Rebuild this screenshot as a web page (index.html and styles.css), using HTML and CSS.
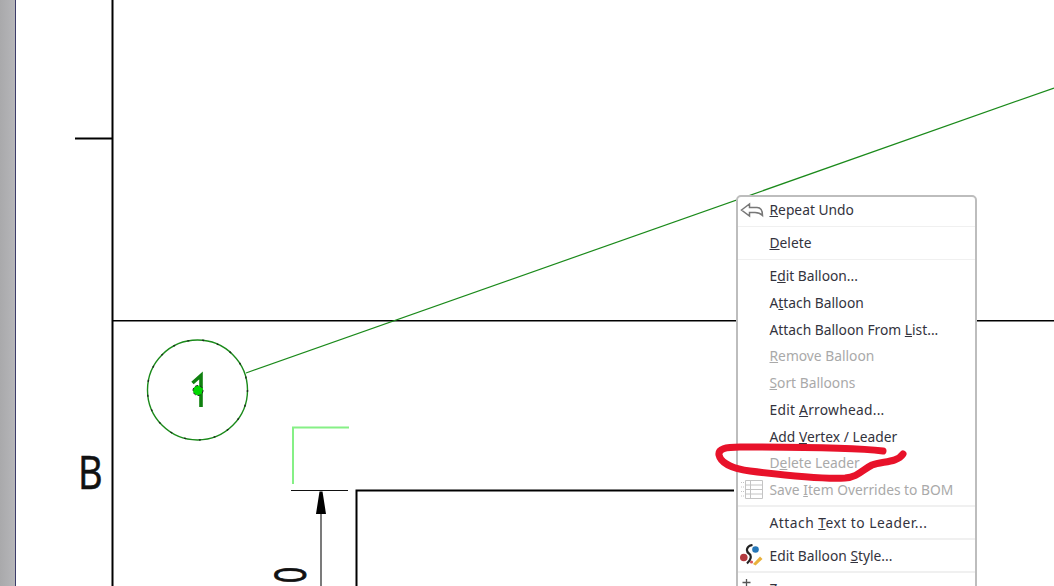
FILE: index.html
```html
<!DOCTYPE html>
<html lang="en">
<head>
    <meta charset="UTF-8">
    <meta name="viewport" content="width=device-width, initial-scale=1.0">
    <title>Balloon context menu</title>
    <link rel="stylesheet" href="styles.css">
</head>
<body>

    <!-- Grey strip left of the sheet -->
    <div class="side-strip"></div>

    <!-- Drawing sheet -->
    <div class="sheet">
        <svg class="drawing" width="1038" height="586" viewBox="16 0 1038 586">
            <!-- Border and zone lines -->
            <path class="line-heavy" d="M112.500 0V586M75 138.500H112"/>
            <path class="line-mid" d="M112 320.800H1054"/>
            <path class="line-heavy" d="M734 490.500H356.500V586"/>

            <!-- Leader and balloon -->
            <path class="leader" d="M246 373L1054 88"/>
            <circle class="balloon" cx="197.500" cy="390" r="50"/>
            <circle class="balloon-ticks" cx="197.500" cy="390" r="50"/>
            <path class="balloon-num" d="M192.500 383L201 375.500V407"/>
            <circle class="grip" cx="198" cy="390.500" r="5"/>

            <!-- Dimension -->
            <path class="corner" d="M293 484V427.500H349"/>
            <path class="line-thin" d="M291 490.500H348"/>
            <path class="dim-line" d="M321 514V586"/>
            <path class="arrow" d="M319.500 491.500H322.500L326 514H316Z"/>

            <text class="zone-letter" transform="translate(78 488.500) scale(1.03 1.22)">B</text>
            <text class="dim-value" transform="translate(305.500 583) rotate(-90) scale(.76 1.2)">0</text>
        </svg>
    </div>

    <!-- Right click menu -->
    <div class="context-menu">
        <div class="menu-item">
            <svg class="menu-icon" width="24" height="16" viewBox="0 0 24 16">
                <path class="undo-arrow" d="M1.500 8L9.500 2V5.500H17C20 5.500 22.500 8 22.500 13.500C20.500 11.500 18 10.500 15 10.500H9.500V14Z"/>
            </svg>
            <span><u>R</u>epeat Undo</span>
        </div>
        <div class="menu-sep"></div>
        <div class="menu-item"><span><u>D</u>elete</span></div>
        <div class="menu-sep"></div>
        <div class="menu-item"><span>E<u>d</u>it Balloon...</span></div>
        <div class="menu-item"><span>A<u>t</u>tach Balloon</span></div>
        <div class="menu-item"><span>Attach Balloon From <u>L</u>ist...</span></div>
        <div class="menu-item disabled"><span><u>R</u>emove Balloon</span></div>
        <div class="menu-item disabled"><span><u>S</u>ort Balloons</span></div>
        <div class="menu-item"><span class="wider">Edit <u>A</u>rrowhead...</span></div>
        <div class="menu-item"><span>Add <u>V</u>ertex / Leader</span></div>
        <div class="menu-item disabled"><span>D<u>e</u>lete Leader</span></div>
        <div class="menu-item disabled">
            <svg class="menu-icon" width="24" height="22" viewBox="0 0 24 22">
                <path class="bom-grid" d="M5.500 2.500H22.500V20.500H5.500ZM5.500 7H22.500M5.500 11.500H22.500M5.500 16H22.500M10.500 2.500V20.500"/>
                <path class="bom-dots" d="M1 4.500H4M1 9H4M1 13.500H4M1 18H4"/>
            </svg>
            <span>Save <u>I</u>tem Overrides to BOM</span>
        </div>
        <div class="menu-sep"></div>
        <div class="menu-item"><span class="widest">Attach <u>T</u>ext to Leader...</span></div>
        <div class="menu-sep"></div>
        <div class="menu-item">
            <svg class="menu-icon" width="24" height="22" viewBox="0 0 24 22">
                <circle cx="3.800" cy="13.500" r="3.800" fill="#b23a3f"/>
                <circle cx="15.500" cy="5.500" r="3.300" fill="#2677b8"/>
                <path d="M12.500 1C6.500 2 5.500 7 9 9.500C12 11.500 11 16 7 19.500" fill="none" stroke="#222" stroke-width="2.200"/>
                <path d="M13 20L20 12.500L22.500 15L15.500 21.500Z" fill="#e9b23c"/>
                <circle cx="11.500" cy="18" r="1.600" fill="#d9555a"/>
            </svg>
            <span>Edit Balloon <u>S</u>tyle...</span>
        </div>
        <div class="menu-sep"></div>
        <div class="menu-item">
            <svg class="menu-icon" width="24" height="20" viewBox="0 0 24 20">
                <path class="plus-mark" d="M6.500 1V9M2.500 4.500H10.500"/>
            </svg>
            <span>Zoom</span>
        </div>
    </div>

    <!-- Red marker scribble over the menu -->
    <svg class="scribble" width="1054" height="586" viewBox="0 0 1054 586">
        <path class="scribble-line" d="M883 451C850 447 780 447 740 447C725 447 718 449 719 455C721 464 735 469 750 471C790 476 825 479 845 478C858 477 862 470 872 465C882 461 897 463 903 454"/>
    </svg>

</body>
</html>
```

FILE: styles.css
```css
/* General reset */
* {
    margin: 0;
    padding: 0;
    box-sizing: border-box;
}

html, body {
    width: 1054px;
    height: 586px;
    overflow: hidden;
}

body {
    display: flex;
    position: relative;
    background-color: #ffffff;
    font-family: "Noto Sans", "Open Sans", sans-serif;
}

/* Left strip */
.side-strip {
    width: 16px;
    flex: none;
    background: linear-gradient(to right, #a9a9ab, #b6b6b9);
    border-right: 1px solid #3c3c6a;
}

/* Drawing */
.sheet {
    flex: 1;
}

.drawing {
    display: block;
}

.drawing path {
    fill: none;
}

.drawing .line-heavy {
    stroke: #000000;
    stroke-width: 2px;
}

.drawing .line-mid {
    stroke: #000000;
    stroke-width: 1.400px;
}

.drawing .line-thin {
    stroke: #111111;
    stroke-width: 1px;
}

.drawing .dim-line {
    stroke: #333333;
    stroke-width: 1.300px;
}

.drawing .leader {
    stroke: #1b8a1b;
    stroke-width: 1.200px;
}

.balloon {
    fill: none;
    stroke: #1a8a1a;
    stroke-width: 1.400px;
}

.balloon-ticks {
    fill: none;
    stroke: #1c2a1c;
    stroke-width: 1.400px;
    stroke-dasharray: 2 13;
}

.drawing .balloon-num {
    stroke: #0f800f;
    stroke-width: 3.600px;
}

.grip {
    fill: #00d800;
    stroke: #222222;
    stroke-width: 1px;
    stroke-dasharray: 3 2;
}

.drawing .corner {
    stroke: #86f086;
    stroke-width: 2px;
}

.drawing .arrow {
    fill: #000000;
}

.zone-letter {
    font-family: "Open Sans", sans-serif;
    font-size: 37px;
    fill: #111111;
    stroke: #111111;
    stroke-width: .5px;
}

.dim-value {
    font-family: "Open Sans", sans-serif;
    font-size: 37px;
    fill: #111111;
    stroke: #111111;
    stroke-width: .8px;
}

/* Context menu */
.context-menu {
    position: absolute;
    left: 736px;
    top: 195px;
    width: 241px;
    height: 420px;
    background-color: #ffffff;
    border: 2.500px solid #bdbdbd;
    border-radius: 5px;
    font-size: 13.800px;
    color: #33333d;
}

.menu-item {
    display: flex;
    align-items: center;
    position: relative;
    height: 26.700px;
    padding-left: 31.500px;
    white-space: nowrap;
}

.menu-item:first-child {
    margin-top: -.4px;
}

.menu-item.disabled {
    color: #a9a9a9;
}

.wider {
    letter-spacing: .25px;
}

.widest {
    letter-spacing: .5px;
}

.menu-sep {
    height: 1.500px;
    margin: 2.400px 0 2.400px;
    background-color: #f0f0f0;
}

.menu-icon {
    position: absolute;
    left: 2px;
    top: 50%;
    transform: translateY(-50%);
}

.undo-arrow {
    fill: #ffffff;
    stroke: #777777;
    stroke-width: 1.500px;
}

.bom-grid {
    fill: none;
    stroke: #c4c4c4;
    stroke-width: 1px;
}

.bom-dots {
    fill: none;
    stroke: #c4c4c4;
    stroke-width: 1px;
    stroke-dasharray: 1 1;
}

.plus-mark {
    fill: none;
    stroke: #555555;
    stroke-width: 1.300px;
}

/* Marker */
.scribble {
    position: absolute;
    left: 0;
    top: 0;
    pointer-events: none;
}

.scribble-line {
    fill: none;
    stroke: #e8122a;
    stroke-width: 7px;
    stroke-linecap: round;
    stroke-linejoin: round;
}
```
